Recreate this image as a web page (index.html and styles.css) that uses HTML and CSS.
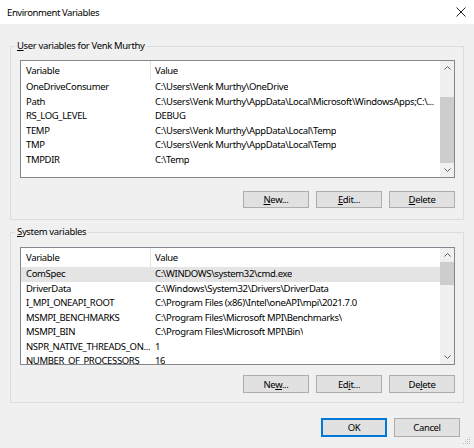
FILE: index.html
```html
<!DOCTYPE html>
<html>
<head>
<meta charset="utf-8">
<link rel="stylesheet" href="styles.css">
</head>
<body>
<div class="window">
  <div class="titlebar">
    <span class="title">Environment Variables</span>
    <svg class="close" width="10" height="10" viewBox="0 0 10 10"><path d="M0.5 0.5 L9.5 9.5 M9.5 0.5 L0.5 9.5" stroke="#222" stroke-width="1" fill="none"/></svg>
  </div>
  <div class="content">
    <fieldset class="group group-user">
      <legend><u>U</u>ser variables for Venk Murthy</legend>
      <div class="list list-user">
        <div class="table">
          <div class="row head"><span class="c1">Variable</span><span class="c2">Value</span></div>
          <div class="row"><span class="c1">OneDriveConsumer</span><span class="c2">C:\Users\Venk Murthy\OneDrive</span></div>
          <div class="row"><span class="c1">Path</span><span class="c2">C:\Users\Venk Murthy\AppData\Local\Microsoft\WindowsApps;C:\...</span></div>
          <div class="row"><span class="c1">RS_LOG_LEVEL</span><span class="c2">DEBUG</span></div>
          <div class="row"><span class="c1">TEMP</span><span class="c2">C:\Users\Venk Murthy\AppData\Local\Temp</span></div>
          <div class="row"><span class="c1">TMP</span><span class="c2">C:\Users\Venk Murthy\AppData\Local\Temp</span></div>
          <div class="row"><span class="c1">TMPDIR</span><span class="c2">C:\Temp</span></div>
        </div>
        <div class="scrollbar">
          <div class="arrow"><svg width="7" height="4" viewBox="0 0 7 4"><path d="M0.5 3.5 L3.5 0.5 L6.5 3.5" stroke="#606060" fill="none"/></svg></div>
          <div class="track"><div class="thumb thumb-user"></div></div>
          <div class="arrow"><svg width="7" height="4" viewBox="0 0 7 4"><path d="M0.5 0.5 L3.5 3.5 L6.5 0.5" stroke="#606060" fill="none"/></svg></div>
        </div>
      </div>
      <div class="btnrow">
        <button class="btn"><u>N</u>ew...</button>
        <button class="btn"><u>E</u>dit...</button>
        <button class="btn"><u>D</u>elete</button>
      </div>
    </fieldset>

    <fieldset class="group group-system">
      <legend><u>S</u>ystem variables</legend>
      <div class="list list-system">
        <div class="table">
          <div class="row head"><span class="c1">Variable</span><span class="c2">Value</span></div>
          <div class="row selected"><span class="c1">ComSpec</span><span class="c2">C:\WINDOWS\system32\cmd.exe</span></div>
          <div class="row"><span class="c1">DriverData</span><span class="c2">C:\Windows\System32\Drivers\DriverData</span></div>
          <div class="row"><span class="c1">I_MPI_ONEAPI_ROOT</span><span class="c2">C:\Program Files (x86)\Intel\oneAPI\mpi\2021.7.0</span></div>
          <div class="row"><span class="c1">MSMPI_BENCHMARKS</span><span class="c2">C:\Program Files\Microsoft MPI\Benchmarks\</span></div>
          <div class="row"><span class="c1">MSMPI_BIN</span><span class="c2">C:\Program Files\Microsoft MPI\Bin\</span></div>
          <div class="row"><span class="c1">NSPR_NATIVE_THREADS_ON...</span><span class="c2">1</span></div>
          <div class="row"><span class="c1">NUMBER_OF_PROCESSORS</span><span class="c2">16</span></div>
        </div>
        <div class="scrollbar">
          <div class="arrow"><svg width="7" height="4" viewBox="0 0 7 4"><path d="M0.5 3.5 L3.5 0.5 L6.5 3.5" stroke="#606060" fill="none"/></svg></div>
          <div class="track"><div class="thumb thumb-system"></div></div>
          <div class="arrow"><svg width="7" height="4" viewBox="0 0 7 4"><path d="M0.5 0.5 L3.5 3.5 L6.5 0.5" stroke="#606060" fill="none"/></svg></div>
        </div>
      </div>
      <div class="btnrow btnrow-system">
        <button class="btn">Ne<u>w</u>...</button>
        <button class="btn">Ed<u>i</u>t...</button>
        <button class="btn">De<u>l</u>ete</button>
      </div>
    </fieldset>

    <div class="dlgrow">
      <button class="btn btn-default">OK</button>
      <button class="btn">Cancel</button>
    </div>
  </div>
  <svg class="grip" width="8" height="8" viewBox="0 0 8 8"><g fill="#b8b8b8"><rect x="6" y="0" width="1" height="1"/><rect x="4" y="2" width="1" height="1"/><rect x="6" y="2" width="1" height="1"/><rect x="2" y="4" width="1" height="1"/><rect x="4" y="4" width="1" height="1"/><rect x="6" y="4" width="1" height="1"/><rect x="0" y="6" width="1" height="1"/><rect x="2" y="6" width="1" height="1"/><rect x="4" y="6" width="1" height="1"/><rect x="6" y="6" width="1" height="1"/></g></svg>
</div>
</body>
</html>
```

FILE: styles.css
```css
html, body {
  margin: 0;
  padding: 0;
  background: #ffffff;
}

body {
  font-family: "Noto Sans", "Open Sans", sans-serif;
  font-size: 9.5px;
  letter-spacing: -0.35px;
  color: #000;
}

.window {
  position: relative;
  width: 474px;
  height: 448px;
  background: #f0f0f0;
  overflow: hidden;
}

.titlebar {
  height: 24px;
  background: #ffffff;
  display: flex;
  align-items: center;
  justify-content: space-between;
  padding: 0 8px 0 7px;
  box-sizing: border-box;
}

.title {
  font-size: 9.5px;
  letter-spacing: -0.4px;
  color: #000;
}

.close {
  display: block;
}

.content {
  padding: 16px 0 0 10px;
  display: flex;
  flex-direction: column;
}

.group {
  margin: 0;
  width: 454px;
  box-sizing: border-box;
  border: 1px solid #dcdcdc;
  padding: 8px 8px 11px 9px;
  min-width: 0;
}

.group legend {
  padding: 0 2px;
  margin-left: -5px;
  line-height: 12px;
  font-size: 9.5px;
}

.group-system {
  margin-top: 6px;
  padding-top: 9px;
  padding-bottom: 9px;
}

.list {
  display: flex;
  height: 118px;
  background: #ffffff;
  border: 1px solid #828790;
  box-sizing: border-box;
}

.table {
  flex: 1;
  min-width: 0;
  overflow: hidden;
}

.row {
  display: flex;
  height: 14.5px;
  line-height: 14.5px;
  white-space: nowrap;
}

.row.head {
  height: 19px;
  line-height: 19px;
}

.row .c1 {
  width: 129px;
  flex: none;
  padding-left: 5px;
  box-sizing: border-box;
  overflow: hidden;
}

.row .c2 {
  padding-left: 5px;
  overflow: hidden;
}

.row.head .c2 {
  border-left: 1px solid #e5e5e5;
  padding-left: 4px;
}

.row.selected {
  background: #e4e4e4;
}

.scrollbar {
  width: 14px;
  flex: none;
  display: flex;
  flex-direction: column;
  background: #f0f0f0;
}

.arrow {
  height: 14px;
  display: flex;
  align-items: center;
  justify-content: center;
  flex: none;
}

.track {
  flex: 1;
  display: flex;
  flex-direction: column;
}

.thumb {
  background: #cdcdcd;
}

.thumb-user {
  margin-top: 22px;
  flex: 1;
}

.thumb-system {
  height: 23px;
}

.btnrow {
  display: flex;
  justify-content: flex-end;
  gap: 7px;
  margin-top: 13px;
}

.btnrow-system {
  margin-top: 10px;
}

.btn {
  width: 66px;
  height: 17px;
  padding: 0;
  margin: 0;
  background: #e1e1e1;
  border: 1px solid #adadad;
  font-family: inherit;
  font-size: 9.5px;
  letter-spacing: -0.35px;
  color: #000;
  line-height: 15px;
}

.btnrow-system .btn {
  height: 18px;
}

.dlgrow {
  display: flex;
  justify-content: flex-end;
  gap: 7px;
  margin-top: 15px;
  padding-right: 14px;
}

.dlgrow .btn {
  height: 19px;
}

.btn-default {
  border: 1px solid #0078d7;
  box-shadow: inset 0 0 0 1px #0078d7;
}

u {
  text-decoration: underline;
  text-underline-offset: 1px;
}

.grip {
  position: absolute;
  right: 3px;
  bottom: 3px;
}
```
